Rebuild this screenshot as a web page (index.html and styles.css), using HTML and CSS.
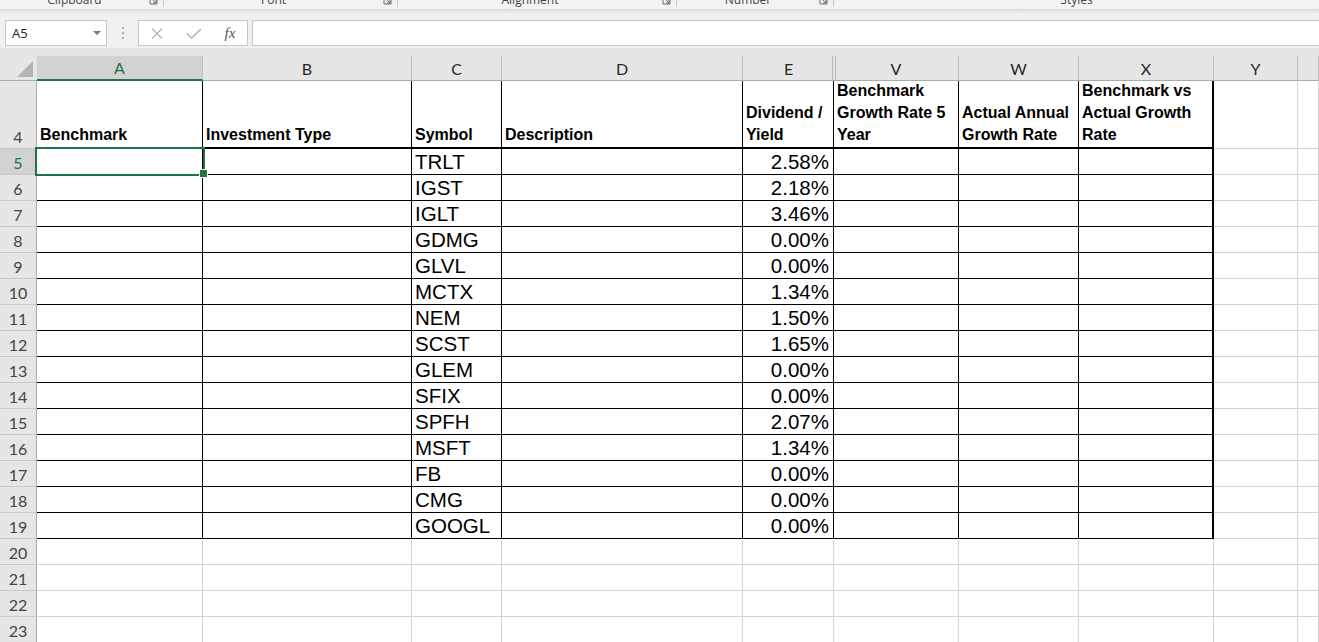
FILE: index.html
```html
<!DOCTYPE html>
<html>
<head>
  <title>Benchmark - Excel</title>
  <link rel="stylesheet" href="styles.css">
</head>
<body>
  <div class="ribbon">
    <div class="group g-clipboard">
      <span class="group-label">Clipboard</span>
      <svg class="launcher" width="9" height="9" viewBox="0 0 9 9"><path d="M1 4V8H8V1H4M3 3L7 7M7 4V7H4" fill="none" stroke="#6d6d6d" stroke-width="1"/></svg>
    </div>
    <div class="group g-font">
      <span class="group-label">Font</span>
      <svg class="launcher" width="9" height="9" viewBox="0 0 9 9"><path d="M1 4V8H8V1H4M3 3L7 7M7 4V7H4" fill="none" stroke="#6d6d6d" stroke-width="1"/></svg>
    </div>
    <div class="group g-alignment">
      <span class="group-label">Alignment</span>
      <svg class="launcher" width="9" height="9" viewBox="0 0 9 9"><path d="M1 4V8H8V1H4M3 3L7 7M7 4V7H4" fill="none" stroke="#6d6d6d" stroke-width="1"/></svg>
    </div>
    <div class="group g-number">
      <span class="group-label">Number</span>
      <svg class="launcher" width="9" height="9" viewBox="0 0 9 9"><path d="M1 4V8H8V1H4M3 3L7 7M7 4V7H4" fill="none" stroke="#6d6d6d" stroke-width="1"/></svg>
    </div>
    <div class="group g-styles">
      <span class="group-label">Styles</span>
    </div>
  </div>
  <div class="ribbon-shadow"></div>

  <div class="formula-bar">
    <div class="name-box">
      <span>A5</span>
      <svg width="8" height="4" viewBox="0 0 8 4"><polygon points="0,0 8,0 4,4" fill="#7a7a7a"/></svg>
    </div>
    <div class="grip"><i></i><i></i><i></i></div>
    <div class="fx-box">
      <svg width="12" height="11" viewBox="0 0 12 11"><path d="M1 0.5L11 10.5M11 0.5L1 10.5" stroke="#b5b5b5" stroke-width="1.3"/></svg>
      <svg width="16" height="11" viewBox="0 0 16 11"><path d="M1 5.5L5.5 10L15 1" fill="none" stroke="#b5b5b5" stroke-width="1.6"/></svg>
      <span class="fx">fx</span>
    </div>
    <div class="formula-input"></div>
  </div>

  <div class="sheet-top"></div>
  <div class="sheet" id="sheet">
    <div class="corner">
      <svg width="36" height="24" viewBox="0 0 36 24"><polygon points="33,5 33,21 17,21" fill="#b4b4b4"/></svg>
    </div>
    <div class="ch sel">A</div>
    <div class="ch">B</div>
    <div class="ch">C</div>
    <div class="ch">D</div>
    <div class="ch before-hidden">E</div>
    <div class="ch after-hidden">V</div>
    <div class="ch">W</div>
    <div class="ch">X</div>
    <div class="ch">Y</div>
    <div class="ch"></div>

    <div class="rh">4</div>
    <div class="c t hd">Benchmark</div>
    <div class="c t hd">Investment Type</div>
    <div class="c t hd">Symbol</div>
    <div class="c t hd">Description</div>
    <div class="c t hd">Dividend /<br>Yield</div>
    <div class="c t hd">Benchmark<br>Growth Rate 5<br>Year</div>
    <div class="c t hd">Actual Annual<br>Growth Rate</div>
    <div class="c t hd edge">Benchmark vs<br>Actual Growth<br>Rate</div>
    <div class="c"></div>
    <div class="c"></div>

    <div class="selection"></div>
  </div>

  <script src="script.js"></script>
</body>
</html>
```

FILE: styles.css
```css
* {
  margin: 0;
  padding: 0;
  box-sizing: border-box;
}

body {
  width: 1319px;
  height: 642px;
  overflow: hidden;
  background: #fff;
  font-family: 'Open Sans', 'Noto Sans', sans-serif;
}

/* Ribbon group labels (cut off at the top) */
.ribbon {
  display: flex;
  height: 9px;
  background: #f3f3f3;
  overflow: hidden;
}

.group {
  display: flex;
  align-items: flex-start;
  height: 7px;
  border-right: 1px solid #c8c8c8;
}

.g-clipboard { width: 164px; }
.g-font { width: 234px; }
.g-alignment { width: 279px; }
.g-number { width: 157px; }
.g-styles { flex: 1; border-right: none; }

.group-label {
  flex: 1;
  text-align: center;
  font-size: 12px;
  line-height: 16px;
  margin-top: -8px;
  color: #444;
}

.launcher {
  display: block;
  margin-top: -4px;
  margin-right: 5px;
}

.ribbon-shadow {
  height: 4px;
  background: linear-gradient(#d9d9d9, #f0f0f0);
}

/* Formula bar */
.formula-bar {
  display: flex;
  height: 35px;
  padding: 7px 0 2px 5px;
  background: #f0f0f0;
}

.name-box {
  width: 102px;
  height: 26px;
  background: #fff;
  border: 1px solid #c6c6c6;
  display: flex;
  align-items: center;
  justify-content: space-between;
  padding: 0 5px 0 6px;
  font-size: 13px;
  color: #222;
}

.grip {
  width: 31px;
  display: flex;
  flex-direction: column;
  align-items: center;
  justify-content: center;
  gap: 3px;
}

.grip i {
  width: 2px;
  height: 2px;
  background: #b3b3b3;
}

.fx-box {
  width: 110px;
  height: 26px;
  background: #fff;
  border: 1px solid #c6c6c6;
  display: flex;
  align-items: center;
  justify-content: space-around;
}

.fx {
  font-family: 'Liberation Serif', serif;
  font-style: italic;
  font-size: 15px;
  color: #555;
}

.formula-input {
  flex: 1;
  height: 26px;
  margin-left: 4px;
  background: #fff;
  border: 1px solid #c6c6c6;
  border-right: none;
}

.sheet-top {
  height: 8px;
  background: #e6e6e6;
}

/* Worksheet grid */
.sheet {
  position: relative;
  display: grid;
  grid-template-columns: 37px 166px 209px 90px 241px 91px 125px 120px 135px 84px 1fr;
  grid-template-rows: 25px 68px;
  grid-auto-rows: 26px;
}

.corner {
  background: #e6e6e6;
  border-bottom: 1px solid #ababab;
}

.corner svg {
  display: block;
}

.ch {
  background: #e6e6e6;
  border-right: 1px solid #c0c0c0;
  border-bottom: 1px solid #ababab;
  display: flex;
  align-items: center;
  justify-content: center;
  font-family: Lato, sans-serif;
  font-size: 16px;
  color: #262626;
}

.ch.sel {
  background: #d2d2d2;
  color: #217346;
  border-bottom: 2px solid #217346;
}

.ch.before-hidden {
  border-right: none;
  box-shadow: inset -1px 0 0 #e6e6e6, inset -2px 0 0 #b8b8b8;
}

.ch.after-hidden {
  box-shadow: inset 1px 0 0 #e6e6e6, inset 2px 0 0 #b8b8b8;
}

.rh {
  background: #e6e6e6;
  border-right: 1px solid #ababab;
  border-bottom: 1px solid #c8c8c8;
  display: flex;
  align-items: flex-end;
  justify-content: center;
  padding-bottom: 2px;
  font-family: Lato, sans-serif;
  font-size: 16px;
  line-height: 19px;
  color: #444;
}

.rh.sel {
  background: #d2d2d2;
  color: #217346;
}

.c {
  border-right: 1px solid #d4d4d4;
  border-bottom: 1px solid #d4d4d4;
  display: flex;
  align-items: flex-end;
  padding: 0 3px;
  overflow: hidden;
  white-space: nowrap;
  font-family: 'Liberation Sans', Arial, sans-serif;
  color: #000;
}

.c.t {
  border-color: #000;
}

.c.hd {
  font-weight: bold;
  font-size: 16px;
  line-height: 22px;
  padding-bottom: 1px;
  border-bottom: 2px solid #000;
}

.c.edge {
  border-right: 2px solid #000;
}

.c.val {
  font-size: 20.5px;
  line-height: 20px;
  padding-bottom: 2px;
}

.c.num {
  justify-content: flex-end;
  padding-right: 4px;
}

.selection {
  position: absolute;
  left: 35px;
  top: 91px;
  width: 170px;
  height: 29px;
  border: 2px solid #217346;
  pointer-events: none;
}

.selection::after {
  content: '';
  position: absolute;
  right: -5px;
  bottom: -4px;
  width: 7px;
  height: 7px;
  background: #217346;
  border: 1px solid #fff;
}
```

FILE: script.js
```js
// rows 5-23: symbols and dividend yields for the benchmark table
var symbols = ['TRLT', 'IGST', 'IGLT', 'GDMG', 'GLVL', 'MCTX', 'NEM', 'SCST',
  'GLEM', 'SFIX', 'SPFH', 'MSFT', 'FB', 'CMG', 'GOOGL'];
var yields = ['2.58%', '2.18%', '3.46%', '0.00%', '0.00%', '1.34%', '1.50%', '1.65%',
  '0.00%', '0.00%', '2.07%', '1.34%', '0.00%', '0.00%', '0.00%'];

var sheet = document.getElementById('sheet');
var selection = sheet.querySelector('.selection');

function addCell(cls, text) {
  var div = document.createElement('div');
  div.className = cls;
  if (text) div.textContent = text;
  sheet.insertBefore(div, selection);
}

for (var r = 5; r <= 23; r++) {
  var i = r - 5;
  var inTable = r <= 19;
  addCell(r === 5 ? 'rh sel' : 'rh', String(r));

  // A B C D E V W X Y Z
  for (var c = 0; c < 10; c++) {
    var cls = 'c';
    var text = '';
    if (inTable && c < 8) cls += ' t';
    if (inTable && c === 7) cls += ' edge';
    if (inTable && c === 2) {
      cls += ' val';
      text = symbols[i];
    }
    if (inTable && c === 4) {
      cls += ' val num';
      text = yields[i];
    }
    addCell(cls, text);
  }
}
```
